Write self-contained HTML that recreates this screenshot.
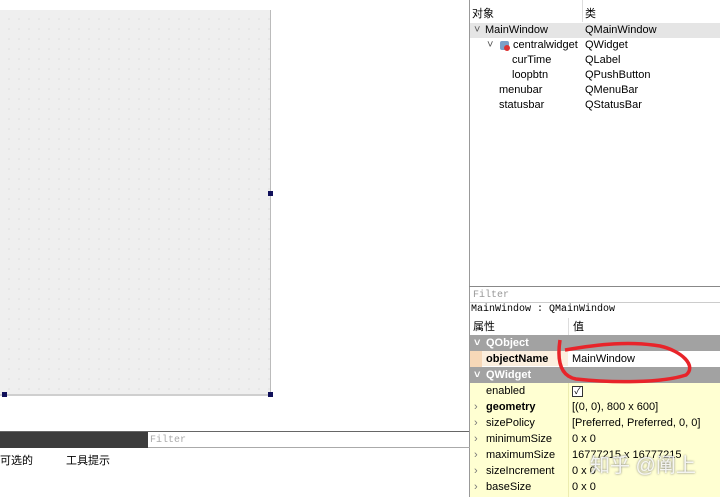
<!DOCTYPE html><html><head><style>
body{margin:0;width:720px;height:497px;overflow:hidden;background:#fff;font-family:"Liberation Sans","Noto Sans CJK SC",sans-serif;font-size:11px;color:#000;position:relative}
.a{position:absolute}
.form{left:0;top:10px;width:270px;height:384px;background-color:#efefef;background-image:radial-gradient(#d0d0d0 0.6px,transparent 0.8px);background-size:10px 10px;background-position:4px 4px;border-right:1px solid #bbb;border-bottom:2px solid #cfcfcf}
.h{width:5px;height:5px;background:#10105a}
.r{position:absolute;left:470px;width:250px;height:16px;line-height:16px}
.r span{position:absolute}
.t{position:absolute;left:470px;width:250px;height:15px;line-height:15px}
.t span{position:absolute}
</style></head><body>
<div class="a form"></div>
<div class="a h" style="left:268px;top:191px"></div>
<div class="a h" style="left:268px;top:392px"></div>
<div class="a h" style="left:2px;top:392px"></div>
<div class="a" style="left:469px;top:0;width:1px;height:497px;background:#999"></div>
<div class="a" style="left:0;top:431px;width:469px;height:1px;background:#666"></div>
<div class="a" style="left:0;top:432px;width:148px;height:16px;background:#3c3c3c"></div>
<div class="a" style="left:148px;top:432px;width:321px;height:15px;border-bottom:1px solid #aaa;font-family:'Liberation Mono',monospace;color:#aaa;font-size:10px;line-height:17px;padding-left:2px">Filter</div>
<div class="a" style="left:0;top:452px;font-size:11px">可选的</div>
<div class="a" style="left:66px;top:452px;font-size:11px">工具提示</div>
<div class="a" style="left:582px;top:0;width:1px;height:22px;background:#ddd"></div>
<div class="t" style="top:7px"><span style="left:2px">对象</span><span style="left:115px">类</span></div>
<div class="t" style="top:23px;background:#e5e5e5"><span style="left:4px;color:#555">˅</span><span style="left:15px">MainWindow</span><span style="left:115px">QMainWindow</span></div>
<div class="t" style="top:38px"><span style="left:17px;color:#555">˅</span><span style="left:30px;top:3px;width:9px;height:9px;background:#7aa0c8;border-radius:2px"></span><span style="left:34px;top:7px;width:6px;height:6px;background:#d33;border-radius:50%"></span><span style="left:43px">centralwidget</span><span style="left:115px">QWidget</span></div>
<div class="t" style="top:53px"><span style="left:42px">curTime</span><span style="left:115px">QLabel</span></div>
<div class="t" style="top:68px"><span style="left:42px">loopbtn</span><span style="left:115px">QPushButton</span></div>
<div class="t" style="top:83px"><span style="left:29px">menubar</span><span style="left:115px">QMenuBar</span></div>
<div class="t" style="top:98px"><span style="left:29px">statusbar</span><span style="left:115px">QStatusBar</span></div>
<div class="a" style="left:469px;top:286px;width:251px;height:1px;background:#888"></div>
<div class="a" style="left:470px;top:288px;width:250px;height:14px;border-bottom:1px solid #ccc;font-family:'Liberation Mono',monospace;color:#999;font-size:10px;line-height:16px;padding-left:3px">Filter</div>
<div class="a" style="left:471px;top:303px;font-family:'Liberation Mono',monospace;font-size:10px;line-height:14px">MainWindow : QMainWindow</div>
<div class="r" style="top:319px"><span style="left:3px">属性</span><span style="left:103px">值</span></div>
<div class="a" style="left:568px;top:318px;width:1px;height:17px;background:#ddd"></div>
<div class="r" style="top:335px;background:#a2a2a2;color:#fff;font-weight:bold"><span style="left:4px">˅</span><span style="left:16px">QObject</span></div>
<div class="r" style="top:351px;background:#fff"><span style="left:0;width:12px;height:16px;background:#f7d8b8"></span><span style="left:12px;width:86px;height:15px;background:#fcefdf;"></span><span style="left:16px;font-weight:bold">objectName</span><span style="left:102px">MainWindow</span></div>
<div class="r" style="top:367px;background:#a2a2a2;color:#fff;font-weight:bold"><span style="left:4px">˅</span><span style="left:16px">QWidget</span></div>
<div class="a" style="left:470px;top:383px;width:250px;height:114px;background:#ffffd2"></div>
<div class="a" style="left:568px;top:383px;width:1px;height:114px;background:#ececb0"></div>
<div class="r" style="top:383px"><span style="left:16px">enabled</span><span style="left:102px;top:3px;width:9px;height:9px;border:1px solid #333;line-height:9px;font-size:9px;text-align:center;background:#fff">✓</span></div>
<div class="r" style="top:399px"><span style="left:4px;color:#777">›</span><span style="left:16px;font-weight:bold">geometry</span><span style="left:102px">[(0, 0), 800 x 600]</span></div>
<div class="r" style="top:415px"><span style="left:4px;color:#777">›</span><span style="left:16px">sizePolicy</span><span style="left:102px">[Preferred, Preferred, 0, 0]</span></div>
<div class="r" style="top:431px"><span style="left:4px;color:#777">›</span><span style="left:16px">minimumSize</span><span style="left:102px">0 x 0</span></div>
<div class="r" style="top:447px"><span style="left:4px;color:#777">›</span><span style="left:16px">maximumSize</span><span style="left:102px">16777215 x 16777215</span></div>
<div class="r" style="top:463px"><span style="left:4px;color:#777">›</span><span style="left:16px">sizeIncrement</span><span style="left:102px">0 x 0</span></div>
<div class="r" style="top:479px"><span style="left:4px;color:#777">›</span><span style="left:16px">baseSize</span><span style="left:102px">0 x 0</span></div>
<div class="a" style="left:590px;top:449px;font-size:20px;color:rgba(255,255,255,.85);text-shadow:0 0 2px #777">知乎 @阐上</div>
<svg class="a" style="left:0;top:0" width="720" height="497"><path d="M560 340 C557 360,560 376,576 379 C612 383,662 383,686 375 C697 366,682 351,660 346 C630 341,600 344,565 350" fill="none" stroke="#e8242a" stroke-width="3.5"/></svg>
</body></html>
